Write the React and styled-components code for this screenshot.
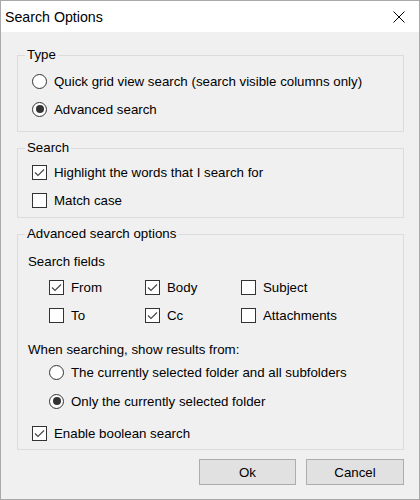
import React from "react";
import styled, { createGlobalStyle } from "styled-components";

const GlobalStyle = createGlobalStyle`
  html, body {
    margin: 0;
    padding: 0;
    background: #f0f0f0;
  }
  body {
    font-family: "Liberation Sans", Arial, sans-serif;
    font-size: 13.3px;
    color: #000;
  }
`;

const Window = styled.div`
  width: 420px;
  height: 500px;
  box-sizing: border-box;
  border: 1px solid #a9a9a9;
  background: #f0f0f0;
  display: flex;
  flex-direction: column;
`;

const TitleBar = styled.div`
  height: 31px;
  background: #fff;
  display: flex;
  align-items: center;
  justify-content: space-between;
  padding-left: 4px;
  font-size: 14.2px;
`;

const CloseButton = styled.div`
  width: 40px;
  height: 31px;
  display: flex;
  align-items: center;
  justify-content: center;
`;

const Body = styled.div`
  padding: 15px 15px 0 16px;
  display: flex;
  flex-direction: column;
`;

const Group = styled.fieldset`
  margin: ${p => p.$gap || 0}px 0 0 0;
  padding: 0;
  border: 1px solid #dcdcdc;
  min-width: 0;
`;

const Legend = styled.legend`
  margin-left: 7px;
  padding: 0 2px;
  line-height: 16px;
  font-size: 13.3px;
`;

const GroupInner = styled.div`
  padding: ${p => p.$pad};
  display: flex;
  flex-direction: column;
`;

const Row = styled.div`
  height: ${p => p.$h || 28}px;
  display: flex;
  align-items: center;
  padding-left: ${p => p.$indent || 0}px;
  margin-top: ${p => p.$mt || 0}px;
`;

const Caption = styled.div`
  line-height: 16px;
  margin-top: ${p => p.$mt || 0}px;
`;

const FieldGrid = styled.div`
  display: grid;
  grid-template-columns: repeat(3, 96px);
  grid-auto-rows: 28px;
  padding-left: 21px;
  margin-top: 3px;
`;

const Box = styled.span`
  width: 15px;
  height: 15px;
  box-sizing: border-box;
  border: 1px solid #333;
  border-radius: ${p => (p.$round ? "50%" : "0")};
  background: #fff;
  flex: none;
  display: flex;
  align-items: center;
  justify-content: center;
  position: relative;
`;

const Dot = styled.span`
  width: 8px;
  height: 8px;
  border-radius: 50%;
  background: #333;
`;

const Tick = styled.svg`
  position: absolute;
  left: -1px;
  top: -1px;
`;

const Label = styled.span`
  margin-left: 7px;
  white-space: nowrap;
`;

const Footer = styled.div`
  display: flex;
  justify-content: flex-end;
  gap: 10px;
  margin-top: 9px;
`;

const Button = styled.div`
  width: ${p => p.$w}px;
  height: 26px;
  box-sizing: border-box;
  border: 1px solid #adadad;
  background: #e1e1e1;
  display: flex;
  align-items: center;
  justify-content: center;
`;

function Option({ type, checked, label }) {
  const radio = type === "radio";
  return (
    <>
      <Box $round={radio}>
        {radio && checked && <Dot />}
        {!radio && checked && (
          <Tick width="15" height="15" viewBox="0 0 15 15">
            <polyline
              points="3,7.5 6,10.5 12,4.5"
              fill="none"
              stroke="#444"
              strokeWidth="1.1"
            />
          </Tick>
        )}
      </Box>
      <Label>{label}</Label>
    </>
  );
}

const fields = [
  { label: "From", checked: true },
  { label: "Body", checked: true },
  { label: "Subject", checked: false },
  { label: "To", checked: false },
  { label: "Cc", checked: true },
  { label: "Attachments", checked: false }
];

export default function App() {
  return (
    <>
      <GlobalStyle />
      <Window>
        <TitleBar>
          <span>Search Options</span>
          <CloseButton>
            <svg width="12" height="12" viewBox="0 0 12 12">
              <path d="M0.5 0.5 L11.5 11.5 M11.5 0.5 L0.5 11.5" stroke="#000" strokeWidth="1" />
            </svg>
          </CloseButton>
        </TitleBar>
        <Body>
          <Group>
            <Legend>Type</Legend>
            <GroupInner $pad="4px 0 8px 14px">
              <Row>
                <Option type="radio" label="Quick grid view search (search visible columns only)" />
              </Row>
              <Row>
                <Option type="radio" checked label="Advanced search" />
              </Row>
            </GroupInner>
          </Group>

          <Group $gap={8}>
            <Legend>Search</Legend>
            <GroupInner $pad="2px 0 3px 14px">
              <Row>
                <Option type="check" checked label="Highlight the words that I search for" />
              </Row>
              <Row>
                <Option type="check" label="Match case" />
              </Row>
            </GroupInner>
          </Group>

          <Group $gap={8}>
            <Legend>Advanced search options</Legend>
            <GroupInner $pad="0 0 2px 10px">
              <Caption $mt={12}>Search fields</Caption>
              <FieldGrid>
                {fields.map(f => (
                  <Row key={f.label}>
                    <Option type="check" checked={f.checked} label={f.label} />
                  </Row>
                ))}
              </FieldGrid>
              <Caption $mt={13}>When searching, show results from:</Caption>
              <Row $indent={21}>
                <Option type="radio" label="The currently selected folder and all subfolders" />
              </Row>
              <Row $indent={21} $mt={1}>
                <Option type="radio" checked label="Only the currently selected folder" />
              </Row>
              <Row $indent={4} $mt={4}>
                <Option type="check" checked label="Enable boolean search" />
              </Row>
            </GroupInner>
          </Group>

          <Footer>
            <Button $w={97}>Ok</Button>
            <Button $w={98}>Cancel</Button>
          </Footer>
        </Body>
      </Window>
    </>
  );
}
